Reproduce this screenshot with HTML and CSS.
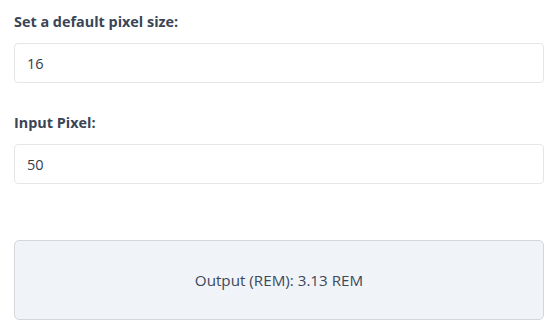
FILE: index.html
```html
<!DOCTYPE html>
<html>
<head>
<meta charset="utf-8">
<link rel="stylesheet" href="styles.css">
</head>
<body>
<div class="converter">
  <div class="field">
    <label class="label" for="base">Set a default pixel size:</label>
    <input class="input" id="base" type="text" value="16">
  </div>
  <div class="field">
    <label class="label" for="px">Input Pixel:</label>
    <input class="input" id="px" type="text" value="50">
  </div>
  <div class="output">Output (REM): 3.13 REM</div>
</div>
</body>
</html>
```
FILE: styles.css
```css
html, body {
  margin: 0;
  padding: 0;
  background: #ffffff;
}
body {
  font-family: "Open Sans", "Liberation Sans", sans-serif;
  color: #3a4556;
}
.converter {
  width: 530px;
  padding: 12px 14px;
  display: flex;
  flex-direction: column;
}
.field {
  display: flex;
  flex-direction: column;
  gap: 11px;
  margin-bottom: 30px;
}
.label {
  font-size: 14.4px;
  font-weight: 700;
  line-height: 20px;
  color: #3a4556;
}
.input {
  box-sizing: border-box;
  height: 40px;
  width: 100%;
  border: 1px solid #e4e6e8;
  border-radius: 4px;
  padding: 0 12px;
  font-family: inherit;
  font-size: 14.5px;
  color: #333c4a;
  background: #fff;
  outline: none;
}
.output {
  box-sizing: border-box;
  margin-top: 26px;
  height: 80px;
  border: 1px solid #d3d7dc;
  border-radius: 5px;
  background: #f0f3f7;
  display: flex;
  align-items: center;
  justify-content: center;
  font-size: 15.2px;
  color: #3d495b;
}
```
